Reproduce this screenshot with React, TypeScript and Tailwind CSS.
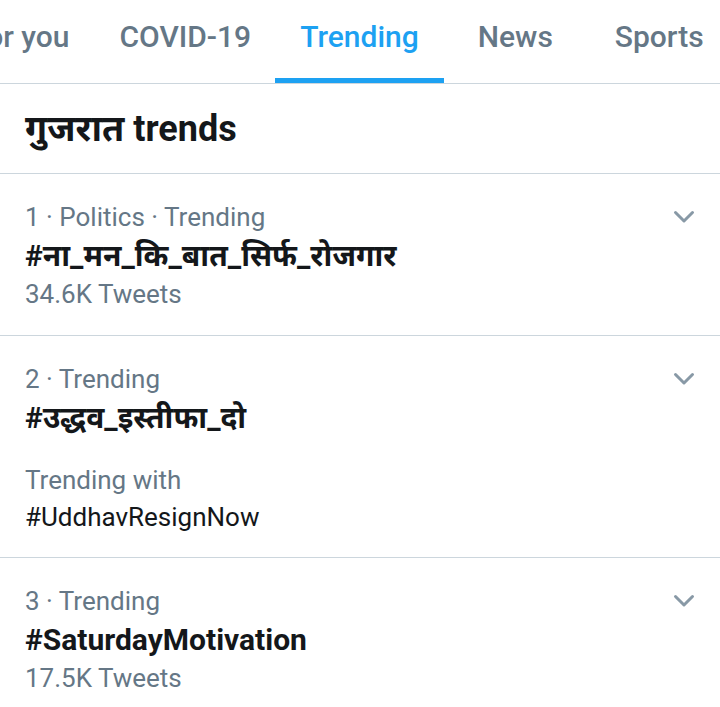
import React from "react";

const tabs = [
  { label: "For you", active: false, pad: "px-[25px]" },
  { label: "COVID-19", active: false, pad: "pl-[25px] pr-[24px]" },
  { label: "Trending", active: true, pad: "px-[25px]" },
  { label: "News", active: false, pad: "pl-[34px] pr-[35px]" },
  { label: "Sports", active: false, pad: "pl-[27px] pr-[25px]" },
];

interface Trend {
  meta: string;
  tag: string;
  tweets?: string;
  with?: string;
}

const trends: Trend[] = [
  { meta: "1 · Politics · Trending", tag: "#ना_मन_कि_बात_सिर्फ_रोजगार", tweets: "34.6K Tweets" },
  { meta: "2 · Trending", tag: "#उद्धव_इस्तीफा_दो", with: "#UddhavResignNow" },
  { meta: "3 · Trending", tag: "#SaturdayMotivation", tweets: "17.5K Tweets" },
];

const Chevron = () => (
  <svg width="22" height="14" viewBox="0 0 22 14" fill="none">
    <path d="M2.5 2.5 11 11 19.5 2.5" stroke="#8899a6" strokeWidth="3" strokeLinecap="round" strokeLinejoin="round" />
  </svg>
);

export default function App() {
  return (
    <div
      className="w-[720px] h-[707px] overflow-hidden bg-white"
      style={{ fontFamily: "Roboto, 'Noto Sans', 'Noto Sans Devanagari', sans-serif" }}
    >
      {/* tab strip, scrolled so first tab is cut */}
      <div className="h-[84px] border-b border-[#ccd6dd] overflow-hidden">
        <div className="flex h-full ml-[-55px]">
          {tabs.map((t) => (
            <div key={t.label} className={`relative flex items-center h-full shrink-0 ${t.pad}`}>
              <span
                className={`text-[30px] font-medium pb-[10px] ${t.active ? "text-[#1da1f2]" : "text-[#657786]"}`}
              >
                {t.label}
              </span>
              {t.active && <div className="absolute left-0 right-0 bottom-0 h-[5px] bg-[#1da1f2]" />}
            </div>
          ))}
        </div>
      </div>

      <div className="h-[90px] flex items-center px-[25px] border-b border-[#ccd6dd]">
        <h2 className="text-[36px] font-bold text-[#14171a]">गुजरात trends</h2>
      </div>

      {trends.map((t, i) => (
        <div
          key={i}
          className={`flex justify-between px-[25px] pt-[24px] ${t.with ? "pb-[22px]" : "pb-[23px]"} border-b border-[#ccd6dd]`}
        >
          <div className="flex flex-col">
            <div className="text-[26px] leading-[38px] text-[#657786]">{t.meta}</div>
            <div className="text-[30px] leading-[40px] font-bold text-[#14171a]">{t.tag}</div>
            {t.tweets && <div className="text-[26px] leading-[36px] text-[#657786]">{t.tweets}</div>}
            {t.with && (
              <div className="mt-[23px]">
                <div className="text-[26px] leading-[38px] text-[#657786]">Trending with</div>
                <div className="text-[26px] leading-[36px] text-[#14171a]">{t.with}</div>
              </div>
            )}
          </div>
          <div className="pt-[12px]">
            <Chevron />
          </div>
        </div>
      ))}
    </div>
  );
}
